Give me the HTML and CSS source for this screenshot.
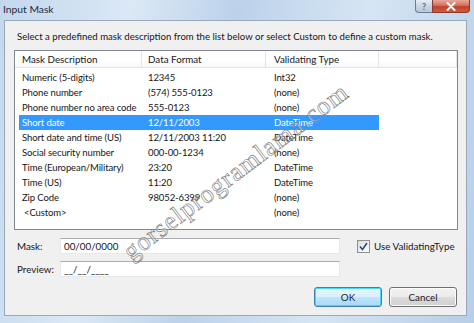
FILE: index.html
```html
<!DOCTYPE html>
<html lang="en">
  <head>
    <meta charset="UTF-8" />
    <title>Input Mask</title>
    <link rel="stylesheet" href="styles.css">
  </head>
  <body>
    <div class="window">
      <div class="titlebar">
        <span class="title">Input Mask</span>
        <div class="caption-btns">
          <span class="cap-help">?</span>
          <span class="cap-close">
            <svg width="10" height="9" viewBox="0 0 10 9"><path d="M1.5 1 L8.5 8 M8.5 1 L1.5 8" stroke="#fff" stroke-width="2" stroke-linecap="round"/></svg>
          </span>
        </div>
      </div>

      <div class="client">
        <p class="intro">Select a predefined mask description from the list below or select Custom to define a custom mask.</p>

        <div class="listview">
          <div class="lv-head">
            <span class="c1">Mask Description</span>
            <span class="c2">Data Format</span>
            <span class="c3">Validating Type</span>
            <span class="c4"></span>
          </div>
          <div class="lv-body">
            <div class="lv-row"><span class="c1">Numeric (5-digits)</span><span class="c2">12345</span><span class="c3">Int32</span></div>
            <div class="lv-row"><span class="c1">Phone number</span><span class="c2">(574) 555-0123</span><span class="c3">(none)</span></div>
            <div class="lv-row"><span class="c1">Phone number no area code</span><span class="c2">555-0123</span><span class="c3">(none)</span></div>
            <div class="lv-row selected"><span class="c1">Short date</span><span class="c2">12/11/2003</span><span class="c3">DateTime</span></div>
            <div class="lv-row"><span class="c1">Short date and time (US)</span><span class="c2">12/11/2003 11:20</span><span class="c3">DateTime</span></div>
            <div class="lv-row"><span class="c1">Social security number</span><span class="c2">000-00-1234</span><span class="c3">(none)</span></div>
            <div class="lv-row"><span class="c1">Time (European/Military)</span><span class="c2">23:20</span><span class="c3">DateTime</span></div>
            <div class="lv-row"><span class="c1">Time (US)</span><span class="c2">11:20</span><span class="c3">DateTime</span></div>
            <div class="lv-row"><span class="c1">Zip Code</span><span class="c2">98052-6399</span><span class="c3">(none)</span></div>
            <div class="lv-row custom"><span class="c1">&lt;Custom&gt;</span><span class="c2"></span><span class="c3">(none)</span></div>
          </div>
        </div>

        <div class="field-row">
          <span class="label">Mask:</span>
          <div class="textbox">00/00/0000</div>
          <span class="check">
            <span class="checkbox">
              <svg width="9" height="9" viewBox="0 0 9 9"><path d="M1 4.5 L3.5 7.5 L8 1" fill="none" stroke="#2a4c86" stroke-width="1.6"/></svg>
            </span>
            Use ValidatingType
          </span>
        </div>
        <div class="field-row preview">
          <span class="label">Preview:</span>
          <div class="textbox">__/__/____</div>
        </div>

        <div class="buttons">
          <button class="btn default">OK</button>
          <button class="btn">Cancel</button>
        </div>
      </div>

      <div class="watermark">gorselprogramlama.com</div>
    </div>
  </body>
</html>
```

FILE: styles.css
```css
* {
  box-sizing: border-box;
}

body {
  margin: 0;
  font-family: Lato, "Noto Sans", sans-serif;
  font-size: 9.8px;
  color: #161616;
}

.window {
  position: relative;
  width: 474px;
  height: 323px;
  padding: 0 7px 7px 4px;
  display: flex;
  flex-direction: column;
  overflow: hidden;
  background: linear-gradient(100deg, #c3d8ee 0%, #dbe8f6 25%, #bcd2ea 45%, #d6e5f4 70%, #b7cee7 100%);
}

.titlebar {
  height: 20px;
  margin-left: -1px;
  display: flex;
  justify-content: space-between;
  align-items: flex-start;

  .title {
    padding-top: 3px;
    line-height: 12px;
    font-size: 10.3px;
    color: #1e2b3a;
  }
}

.caption-btns {
  display: flex;
  margin-right: -3px;

  span {
    height: 13px;
    display: flex;
    align-items: center;
    justify-content: center;
    border: 1px solid #6a7d95;
    border-top: none;
  }

  .cap-help {
    width: 17px;
    border-radius: 0 0 0 4px;
    border-right: none;
    color: #5a6b80;
    font-size: 9px;
    font-weight: bold;
    background: linear-gradient(#e6eef7, #c9d6e5 50%, #b7c7da);
  }

  .cap-close {
    width: 38px;
    border-radius: 0 0 4px 0;
    border-color: #8a3a2e;
    background: linear-gradient(#e9a99b, #d5705d 45%, #c1432d 55%, #d05a40);
  }
}

.client {
  flex: 1;
  display: flex;
  flex-direction: column;
  background: #f0f0f0;
  border: 1px solid #98a8ba;
  padding: 0 8px 0 9px;
}

.intro {
  margin: 10px 0 0 3px;
  line-height: 12px;
  font-size: 9.6px;
  white-space: nowrap;
}

.listview {
  height: 180px;
  margin-top: 7px;
  background: #fff;
  border: 1px solid #828790;
}

.lv-head {
  height: 17px;
  display: flex;
  border-bottom: 1px solid #e5e5e5;
  background: linear-gradient(#fff, #fff 60%, #f7f8fa);

  span {
    line-height: 16px;
    border-right: 1px solid #e5e5e5;
    white-space: nowrap;
  }

  .c1 { width: 127px; padding-left: 7px; }
  .c2 { width: 124px; padding-left: 6px; }
  .c3 { width: 113px; padding-left: 8px; }
  .c4 { flex: 1; }
}

.lv-body {
  padding: 2px 0 0 4px;
}

.lv-row {
  width: 360px;
  height: 15px;
  display: flex;
  line-height: 15px;
  white-space: nowrap;
  font-size: 9.5px;
  letter-spacing: -0.1px;

  .c1 { width: 123px; padding-left: 3px; }
  .c2 { width: 124px; padding-left: 6px; }
  .c3 { width: 113px; padding-left: 8px; }

  &.selected {
    background: #3399ff;
    color: #fff;
  }

  &.custom .c1 {
    padding-left: 5px;
  }
}

.field-row {
  display: flex;
  align-items: center;
  height: 16px;
  margin-top: 8px;
  padding-left: 3px;

  &.preview {
    margin-top: 7px;
  }

  .label {
    width: 43px;
  }
}

.textbox {
  width: 280px;
  height: 16px;
  line-height: 14px;
  padding-left: 3px;
  background: #fff;
  border: 1px solid #e3e9ef;
  border-top-color: #abadb3;
}

.check {
  display: flex;
  align-items: center;
  gap: 4px;
  margin-left: 17px;
  white-space: nowrap;
}

.checkbox {
  width: 13px;
  height: 13px;
  display: flex;
  align-items: center;
  justify-content: center;
  border: 1px solid #8f8f8f;
  background: linear-gradient(135deg, #dcdcdc, #fff);
}

.buttons {
  display: flex;
  justify-content: flex-end;
  gap: 7px;
  margin-top: 10px;
  padding-right: 1px;
}

.btn {
  width: 68px;
  height: 20px;
  padding: 0;
  font: inherit;
  color: #1c1c1c;
  border: 1px solid #707070;
  border-radius: 3px;
  background: linear-gradient(#f2f2f2, #ebebeb 50%, #dddddd 50%, #cfcfcf);
  box-shadow: inset 0 0 0 1px #fbfbfb;

  &.default {
    border-color: #3c7fb1;
    box-shadow: inset 0 0 0 1px #48d8fb;
    background: linear-gradient(#eaf6fd, #d9f0fc 50%, #bee6fd 50%, #a7d9f5);
  }
}

.watermark {
  position: absolute;
  left: 236px;
  top: 172px;
  transform: translate(-50%, -50%) rotate(-37deg);
  font-family: "Liberation Serif", serif;
  font-size: 26px;
  letter-spacing: 1px;
  white-space: nowrap;
  color: rgba(255, 255, 255, 0.35);
  -webkit-text-stroke: 0.6px #7a7a7a;
  pointer-events: none;
}
```
